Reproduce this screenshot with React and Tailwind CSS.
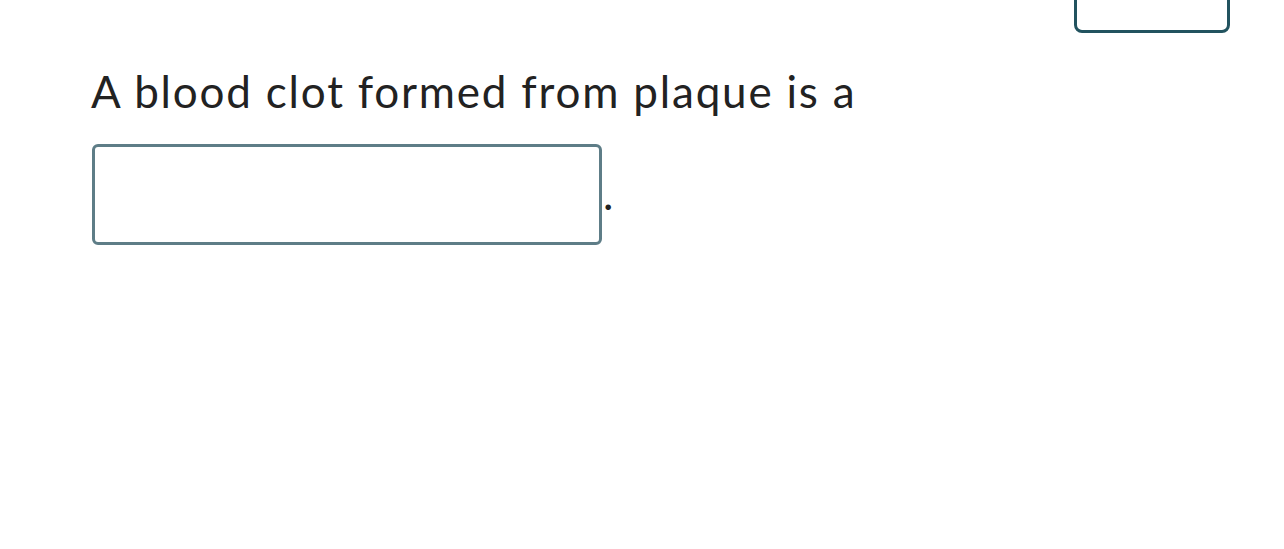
import React from 'react';

function App() {
    return (
        <div className="min-h-screen bg-white text-[#222222]">
            <div className="flex justify-end pr-[54px]">
                <button className="-mt-[19px] h-[52px] w-[156px] rounded-[8px] border-[3px] border-[#22535f] bg-white" />
            </div>
            <div className="pl-[92px] pt-[28px] font-['Lato','Open_Sans',sans-serif]">
                <p className="-ml-[1px] text-[44px] leading-[60px] tracking-[1.8px]">A blood clot formed from plaque is a</p>
                <div className="mt-[23px] flex items-center">
                    <input
                        type="text"
                        className="h-[101px] w-[510px] rounded-[6px] border-[3px] border-[#5e7d87] bg-white px-3 text-[44px] outline-none"
                    />
                    <span className="ml-[1px] -mt-[4px] text-[44px] leading-none">.</span>
                </div>
            </div>
        </div>
    );
}

export default App;
